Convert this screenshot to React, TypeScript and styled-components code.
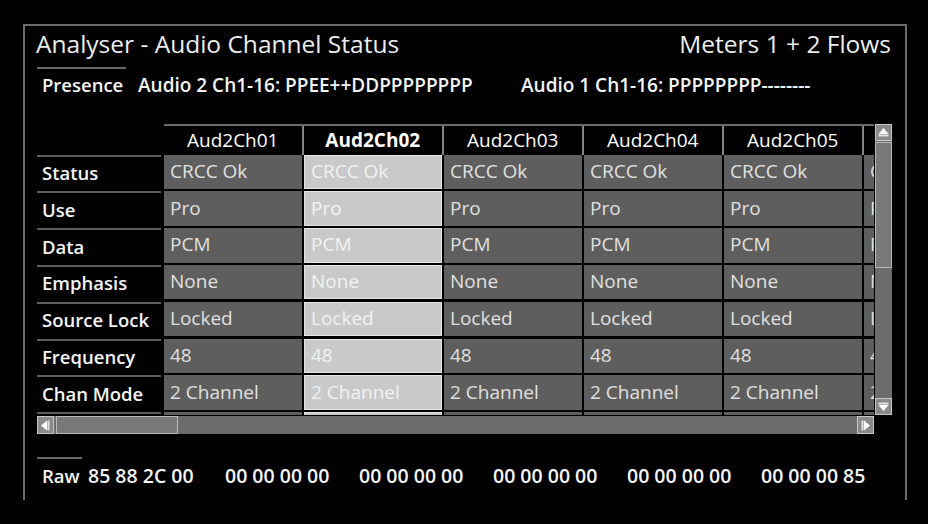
import React from 'react';
import styled, { createGlobalStyle } from 'styled-components';

const GlobalStyle = createGlobalStyle`
  html, body {
    margin: 0;
    padding: 0;
    background: #000;
  }
  body {
    width: 928px;
    height: 524px;
    overflow: hidden;
    font-family: "Open Sans", "DejaVu Sans", sans-serif;
    color: #f4f4f4;
  }
`;

const Panel = styled.div`
  margin: 24px 0 0 23px;
  width: 884px;
  height: 476px;
  box-sizing: border-box;
  border: 2px solid #6a6a6a;
  border-bottom: none;
  padding: 1px 14px 0 12px;
  display: flex;
  flex-direction: column;
`;

const TitleRow = styled.div`
  display: flex;
  justify-content: space-between;
  align-items: baseline;
  font-size: 24.5px;
  line-height: 34px;
  color: #ededed;
`;

const Title = styled.h1`
  margin: 0 0 0 -1px;
  font: inherit;
`;

const Rule = styled.div<{ $width: number; $top: number }>`
  width: ${(p) => p.$width}px;
  height: 2px;
  margin-top: ${(p) => p.$top}px;
  background: #686868;
`;

const PresenceRow = styled.div`
  display: grid;
  grid-template-columns: 96px 383px auto;
  margin-top: 3px;
  padding-left: 5px;
  font-size: 19px;
  line-height: 26px;
  font-weight: 600;
  white-space: nowrap;
`;

const PresenceLabel = styled.span`
  font-size: 18.5px;
`;

const TableGrid = styled.div`
  display: grid;
  grid-template-columns: 126px 710px 17px;
  grid-template-rows: 291px 18px;
  column-gap: 1px;
  row-gap: 1px;
  margin-top: 26px;
`;

const LabelColumn = styled.div`
  overflow: hidden;
  display: flex;
  flex-direction: column;
`;

const LabelHead = styled.div`
  flex: none;
  height: 30.7px;
`;

const Label = styled.div`
  flex: none;
  height: 36.8px;
  box-sizing: border-box;
  margin-right: 2px;
  padding: 0 0 3px 5px;
  border-top: 2px solid #5c5c5c;
  display: flex;
  align-items: center;
  font-size: 18.5px;
  font-weight: 600;
  white-space: nowrap;
`;

const Viewport = styled.div`
  overflow: hidden;
  display: flex;
  border-top: 2px solid #6a6a6a;
`;

const ChannelCol = styled.div`
  flex: none;
  width: 140px;
  display: flex;
  flex-direction: column;
`;

const ChannelHead = styled.div<{ $active?: boolean }>`
  flex: none;
  height: 28.7px;
  width: 137.5px;
  border-right: 2px solid #858585;
  display: flex;
  align-items: center;
  justify-content: center;
  font-size: 19px;
  font-weight: ${(p) => (p.$active ? 700 : 400)};
  color: #fff;
  white-space: nowrap;
`;

const Cell = styled.div<{ $active?: boolean }>`
  flex: none;
  width: 137.5px;
  height: 34.3px;
  margin-bottom: 2.5px;
  box-sizing: border-box;
  padding: 0 0 2px 6px;
  display: flex;
  align-items: center;
  font-size: 19px;
  white-space: nowrap;
  overflow: hidden;
  background: ${(p) => (p.$active ? '#c9c9c9' : '#5e5e5e')};
  border: ${(p) => (p.$active ? '1px solid #e4e4e4' : 'none')};
  color: ${(p) => (p.$active ? '#f2f2f2' : '#e0e0e0')};
`;

const VScroll = styled.div`
  display: flex;
  flex-direction: column;
  background: #6c6c6c;
`;

const HScroll = styled.div`
  grid-column: 1 / 3;
  display: flex;
  background: #6c6c6c;
`;

const ScrollButton = styled.div`
  flex: none;
  width: 17px;
  height: 17px;
  box-sizing: border-box;
  background: #8a8a8a;
  border: 1px solid #c6c6c6;
  display: flex;
  align-items: center;
  justify-content: center;
  ${HScroll} & {
    height: 18px;
  }
`;

const Thumb = styled.div<{ $vertical?: boolean }>`
  flex: none;
  box-sizing: border-box;
  background: #797979;
  border: 1px solid #b9b9b9;
  ${(p) =>
    p.$vertical
      ? 'height: 126px; margin-top: 1px;'
      : 'width: 122px; margin-left: 2px;'}
`;

const Track = styled.div`
  flex: 1;
`;

const RawRow = styled.div`
  display: grid;
  grid-template-columns: 46px 137px repeat(4, 134px) auto;
  margin-top: 4px;
  padding-left: 5px;
  font-size: 19.5px;
  line-height: 26px;
  font-weight: 600;
  white-space: nowrap;
`;

const RawLabel = styled.span`
  font-size: 18.5px;
`;

type Dir = 'up' | 'down' | 'left' | 'right';

const Arrow = ({ dir }: { dir: Dir }) => {
  const rot = { up: 0, right: 90, down: 180, left: 270 }[dir];
  return (
    <svg width="13" height="13" viewBox="0 0 13 13">
      <g transform={`rotate(${rot} 6.5 6.5)`}>
        <polygon points="6.5,2 11.5,8 1.5,8" fill="#fff" />
        <rect x="1.5" y="8.6" width="10" height="1.8" fill="#e8e8e8" />
      </g>
    </svg>
  );
};

// the last row only peeks in under the viewport edge
const rows = ['Status', 'Use', 'Data', 'Emphasis', 'Source Lock', 'Frequency', 'Chan Mode', ''];

const values = ['CRCC Ok', 'Pro', 'PCM', 'None', 'Locked', '48', '2 Channel', ''];

const channels = ['Aud2Ch01', 'Aud2Ch02', 'Aud2Ch03', 'Aud2Ch04', 'Aud2Ch05', 'Aud2Ch06'];

const raw = ['85 88 2C 00', '00 00 00 00', '00 00 00 00', '00 00 00 00', '00 00 00 00', '00 00 00 85'];

const selected = 1;

export default function App() {
  return (
    <>
      <GlobalStyle />
      <Panel>
        <TitleRow>
          <Title>Analyser - Audio Channel Status</Title>
          <span>Meters 1 + 2 Flows</span>
        </TitleRow>
        <Rule $width={89} $top={6} />
        <PresenceRow>
          <PresenceLabel>Presence</PresenceLabel>
          <span>Audio 2 Ch1-16: PPEE++DDPPPPPPPP</span>
          <span>Audio 1 Ch1-16: PPPPPPPP--------</span>
        </PresenceRow>

        <TableGrid>
          <LabelColumn>
            <LabelHead />
            {rows.map((r, i) => (
              <Label key={i}>{r}</Label>
            ))}
          </LabelColumn>
          <Viewport>
            {channels.map((ch, i) => (
              <ChannelCol key={ch}>
                <ChannelHead $active={i === selected}>{ch}</ChannelHead>
                {values.map((v, j) => (
                  <Cell key={j} $active={i === selected}>
                    {v}
                  </Cell>
                ))}
              </ChannelCol>
            ))}
          </Viewport>
          <VScroll>
            <ScrollButton>
              <Arrow dir="up" />
            </ScrollButton>
            <Thumb $vertical />
            <Track />
            <ScrollButton>
              <Arrow dir="down" />
            </ScrollButton>
          </VScroll>
          <HScroll>
            <ScrollButton>
              <Arrow dir="left" />
            </ScrollButton>
            <Thumb />
            <Track />
            <ScrollButton>
              <Arrow dir="right" />
            </ScrollButton>
          </HScroll>
        </TableGrid>

        <Rule $width={45} $top={23} />
        <RawRow>
          <RawLabel>Raw</RawLabel>
          {raw.map((r, i) => (
            <span key={i}>{r}</span>
          ))}
        </RawRow>
      </Panel>
    </>
  );
}
